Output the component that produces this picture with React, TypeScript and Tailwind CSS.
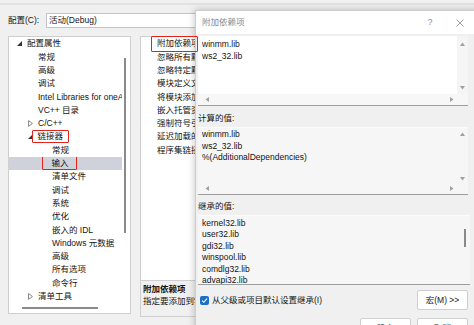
import React from 'react';

type Node = {
  label: string;
  level: 0 | 1 | 2;
  arrow?: 'open' | 'closed';
  box?: 'linker' | 'input';
  selected?: boolean;
};

const tree: Node[] = [
  { label: '配置属性', level: 0, arrow: 'open' },
  { label: '常规', level: 1 },
  { label: '高级', level: 1 },
  { label: '调试', level: 1 },
  { label: 'Intel Libraries for oneAPI', level: 1 },
  { label: 'VC++ 目录', level: 1 },
  { label: 'C/C++', level: 1, arrow: 'closed' },
  { label: '链接器', level: 1, arrow: 'open', box: 'linker' },
  { label: '常规', level: 2 },
  { label: '输入', level: 2, selected: true, box: 'input' },
  { label: '清单文件', level: 2 },
  { label: '调试', level: 2 },
  { label: '系统', level: 2 },
  { label: '优化', level: 2 },
  { label: '嵌入的 IDL', level: 2 },
  { label: 'Windows 元数据', level: 2 },
  { label: '高级', level: 2 },
  { label: '所有选项', level: 2 },
  { label: '命令行', level: 2 },
  { label: '清单工具', level: 1, arrow: 'closed' },
];

const indent = { 0: 'pl-[18px]', 1: 'pl-[29px]', 2: 'pl-[43px]' };

const props = [
  '附加依赖项',
  '忽略所有默认库',
  '忽略特定默认库',
  '模块定义文件',
  '将模块添加到程序集',
  '嵌入托管资源文件',
  '强制符号引用',
  '延迟加载的 DLL',
  '程序集链接资源',
];

const inherited = ['kernel32.lib', 'user32.lib', 'gdi32.lib', 'winspool.lib', 'comdlg32.lib', 'advapi32.lib'];

function Tri({ dir }: { dir: 'up' | 'down' | 'left' | 'right' }) {
  const pts = {
    up: '0,4 2.5,0.5 5,4',
    down: '0,1 2.5,4.5 5,1',
    left: '4,0 0.5,2.5 4,5',
    right: '1,0 4.5,2.5 1,5',
  }[dir];
  return (
    <svg width="5" height="5" viewBox="0 0 5 5" className="block">
      <polygon points={pts} fill="#a0a0a0" />
    </svg>
  );
}

function TreeArrow({ open }: { open: boolean }) {
  return open ? (
    <svg width="5" height="5" viewBox="0 0 5 5" className="block">
      <polygon points="5,0 5,5 0,5" fill="#333" />
    </svg>
  ) : (
    <svg width="5" height="7" viewBox="0 0 5 7" className="block">
      <polygon points="0.6,0.6 4.4,3.5 0.6,6.4" fill="none" stroke="#777" strokeWidth="0.9" />
    </svg>
  );
}

export default function App() {
  return (
    <div className="relative w-[474px] h-[325px] overflow-hidden bg-[#f0f0f0] text-[8.5px] leading-none text-[#141414] font-['Liberation_Sans','Noto_Sans_CJK_SC',sans-serif]">
      <div className="h-[13px] pt-[3px]">
        <div className="h-[2px] bg-[#e2e2e2]" />
      </div>

      {/* 配置 row */}
      <div className="flex items-center h-[15px] pl-[8px]">
        <span className="w-[38px]">配置(C):</span>
        <div className="w-[155px] h-[15px] bg-white border border-[#c4c4c4] flex items-center pl-[2px]">活动(Debug)</div>
      </div>

      {/* panels */}
      <div className="flex mt-[8px] h-[279px]">
        {/* tree */}
        <div className="ml-[8px] w-[123px] h-[278px] bg-white border border-[#cfcfcf] flex flex-col">
          <div className="flex flex-1 min-w-0">
            <div className="flex-1 min-w-0 overflow-hidden">
              {tree.map((n, i) => (
                <div
                  key={i}
                  className={`flex items-center h-[13.3px] whitespace-nowrap overflow-hidden ${indent[n.level]} ${n.selected ? 'bg-[#cfd2da]' : ''}`}
                >
                  {n.arrow && (
                    <span className="-ml-[10px] w-[10px] flex items-center shrink-0">
                      <TreeArrow open={n.arrow === 'open'} />
                    </span>
                  )}
                  {n.box === 'linker' ? (
                    <span className="-ml-[6px] pl-[4.5px] pr-[5px] h-[13px] inline-flex items-center border-[1.5px] border-[#e2231c] rounded-[1px]">
                      {n.label}
                    </span>
                  ) : n.box === 'input' ? (
                    <span className="-ml-[10px] pl-[8.5px] pr-[7px] h-[14px] inline-flex items-center border-[1.5px] border-[#e2231c] rounded-[1px]">
                      {n.label}
                    </span>
                  ) : (
                    <span>{n.label}</span>
                  )}
                </div>
              ))}
            </div>
            <div className="w-[8px] pl-[2px] shrink-0">
              <div className="mt-[21px] w-[2px] h-[175px] bg-[#8a8a8a]" />
            </div>
          </div>
          <div className="h-[10px] pl-[13px] pt-[4px]">
            <div className="w-[76px] h-[2px] bg-[#8a8a8a]" />
          </div>
        </div>

        {/* property list (right part lies under the dialog) */}
        <div className="ml-[9px] w-[60px] h-[281px] border border-r-0 border-[#cfcfcf] flex flex-col overflow-hidden">
          <div className="h-[243px] bg-white">
            {props.map((p) => (
              <div key={p} className="h-[13.3px] flex items-center pl-[16px] whitespace-nowrap">
                {p}
              </div>
            ))}
          </div>
          <div className="flex-1 border-t border-[#cfcfcf] pl-[2px] pt-[2px] whitespace-nowrap">
            <div className="h-[12px] flex items-center font-bold">附加依赖项</div>
            <div className="h-[12px] flex items-center">指定要添加到链接命令行的附加项目</div>
          </div>
        </div>
      </div>

      {/* red annotation around 附加依赖项 */}
      <div className="absolute left-[151px] top-[36px] w-[47px] h-[16px] border-[1.5px] border-[#e2231c] rounded-[1px] z-20" />

      {/* dialog */}
      <div className="absolute left-[195px] top-[10px] w-[292px] h-[330px] bg-[#f0f0f0] border border-[#cdcdcd] shadow-[0_0_7px_rgba(0,0,0,0.25)] flex flex-col z-10">
        <div className="h-[23px] bg-white flex items-center pl-[6px] text-[#8a8a8a] shrink-0">
          <span className="w-[224px]">附加依赖项</span>
          <span className="w-[8px] text-center text-[9px]">?</span>
          <span className="ml-[22px] w-[8px] flex justify-center">
            <svg width="8" height="8" viewBox="0 0 8 8">
              <path d="M0.5 0.5 L7.5 7.5 M7.5 0.5 L0.5 7.5" stroke="#8a8a8a" strokeWidth="0.8" />
            </svg>
          </span>
        </div>

        <div className="pl-[2px] flex flex-col">
          {/* edit box */}
          <div className="mt-[2px] w-[270px] h-[70px] bg-white border-b border-[#9e9e9e] flex flex-col">
            <div className="flex flex-1">
              <div className="flex-1 pl-[4px] pt-[3px] leading-[11.5px]">
                <div>winmm.lib</div>
                <div>ws2_32.lib</div>
              </div>
              <div className="w-[11px] bg-[#f5f5f5] flex flex-col items-center justify-between pt-[6px] pb-[4px]">
                <Tri dir="up" />
                <Tri dir="down" />
              </div>
            </div>
            <div className="h-[11px] flex items-center pl-[7px] pr-[14px] justify-between bg-[#f7f7f7]">
              <Tri dir="left" />
              <Tri dir="right" />
            </div>
          </div>

          <div className="h-[21px] flex items-center pt-[3px]">计算的值:</div>

          {/* evaluated box */}
          <div className="w-[270px] h-[68px] bg-[#f6f6f6] border-t border-[#fbfbfb] border-b border-b-[#9e9e9e] flex flex-col">
            <div className="flex flex-1">
              <div className="flex-1 pl-[4px] pt-[1px] leading-[11.5px]">
                <div>winmm.lib</div>
                <div>ws2_32.lib</div>
                <div>%(AdditionalDependencies)</div>
              </div>
              <div className="w-[11px] flex flex-col items-center justify-between pt-[4px] pb-[2px]">
                <Tri dir="up" />
                <Tri dir="down" />
              </div>
            </div>
            <div className="h-[11px] flex items-center pl-[7px] pr-[14px] justify-between">
              <Tri dir="left" />
              <Tri dir="right" />
            </div>
          </div>

          <div className="h-[20px] flex items-center pt-[2px]">继承的值:</div>

          {/* inherited box */}
          <div className="w-[272px] h-[70px] bg-[#f6f6f6] border-t border-[#fbfbfb] border-b border-b-[#9e9e9e] flex overflow-hidden">
            <div className="flex-1 pl-[4px] pt-[2px] leading-[11.4px]">
              {inherited.map((l) => (
                <div key={l}>{l}</div>
              ))}
            </div>
            <div className="w-[11px] flex justify-center">
              <div className="mt-[13px] w-[2px] h-[18px] bg-[#8a8a8a]" />
            </div>
          </div>

          {/* checkbox + macro */}
          <div className="mt-[5px] h-[20px] w-[270px] flex items-center">
            <div className="ml-[2px] w-[9px] h-[9px] rounded-[2px] bg-[#1a6fc4] flex items-center justify-center">
              <svg width="7" height="7" viewBox="0 0 7 7">
                <path d="M1 3.6 L2.8 5.3 L6 1.6" fill="none" stroke="white" strokeWidth="1.1" />
              </svg>
            </div>
            <span className="ml-[3px] flex-1">从父级或项目默认设置继承(I)</span>
            <div className="w-[51px] h-[20px] bg-white border border-[#d0d0d0] rounded-[2px] flex items-center justify-center">
              宏(M) &gt;&gt;
            </div>
          </div>

          {/* bottom buttons */}
          <div className="mt-[8px] w-[270px] flex justify-end gap-[6px]">
            <div className="w-[51px] h-[20px] bg-white border border-[#d0d0d0] rounded-[2px] flex items-center justify-center">确定</div>
            <div className="w-[51px] h-[20px] bg-white border border-[#d0d0d0] rounded-[2px] flex items-center justify-center">取消</div>
          </div>
        </div>
      </div>
    </div>
  );
}
